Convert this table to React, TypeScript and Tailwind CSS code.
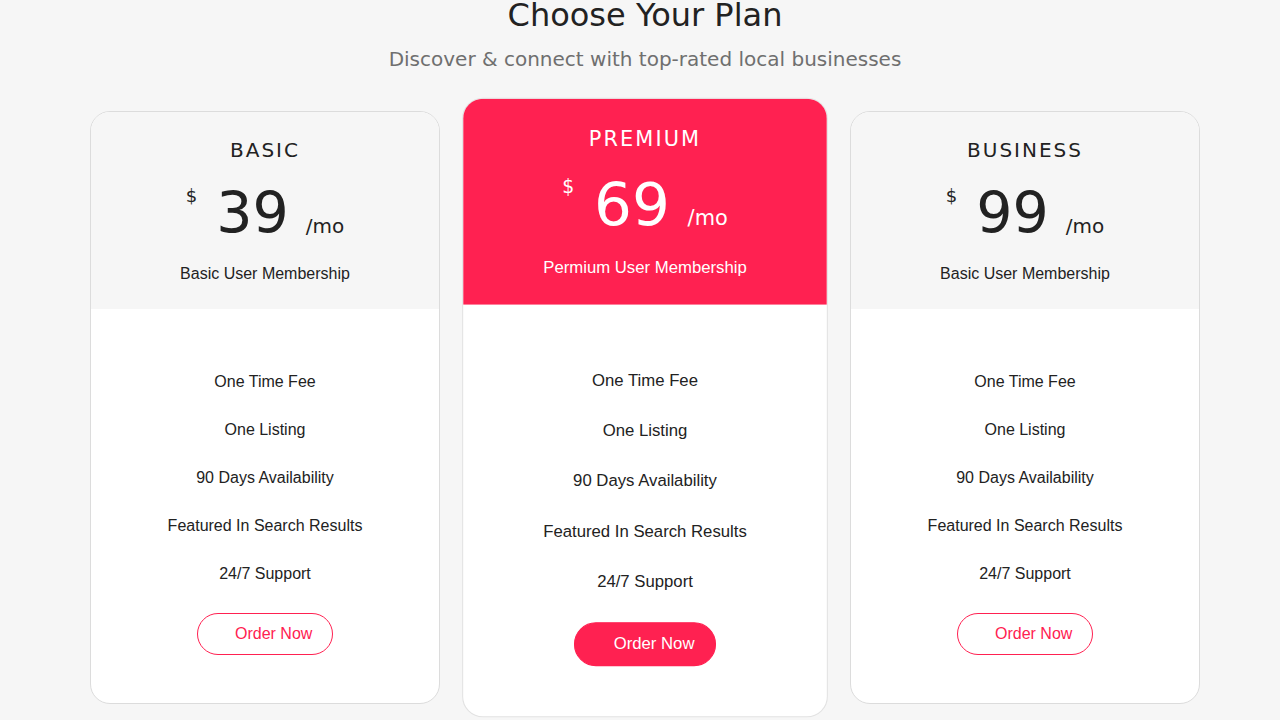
import React from "react";

/* Pricing table — three plans, middle one highlighted and scaled up */

type Plan = {
  name: string;
  price: string;
  blurb: string;
  featured?: boolean;
};

const plans: Plan[] = [
  { name: "BASIC", price: "39", blurb: "Basic User Membership" },
  { name: "PREMIUM", price: "69", blurb: "Permium User Membership", featured: true },
  { name: "BUSINESS", price: "99", blurb: "Basic User Membership" },
];

const features = [
  "One Time Fee",
  "One Listing",
  "90 Days Availability",
  "Featured In Search Results",
  "24/7 Support",
];

const dejavu = "font-['DejaVu_Sans',sans-serif]";
const arial = "font-['Liberation_Sans',Arial,sans-serif]";

function PlanCard({ plan }: { plan: Plan }) {
  const hot = !!plan.featured;
  return (
    <div
      className={`w-[350px] shrink-0 rounded-[20px] border overflow-hidden bg-white ${
        hot ? "border-[#e2e2e2] scale-[1.045] z-10 relative" : "border-[#dcdcdc]"
      }`}
    >
      {/* ── Header ── */}
      <div
        className={`pt-[26px] pb-[23px] text-center ${
          hot ? "bg-[#ff2151] text-white" : "bg-[#f6f6f6] text-[#222]"
        }`}
      >
        <div className={`${dejavu} text-[20px] leading-[24px] tracking-[2px]`}>
          {plan.name}
        </div>
        <div className={`${dejavu} mt-[21px] flex justify-center items-baseline`}>
          <span className="text-[18px] leading-none self-start mt-[4px] mr-[19px]">$</span>
          <span className="text-[57px] leading-[60px]">{plan.price}</span>
          <span className="text-[20px] leading-none ml-[17px]">/mo</span>
        </div>
        <div className={`${arial} mt-[19px] text-[16px] leading-[24px]`}>{plan.blurb}</div>
      </div>

      {/* ── Feature list ── */}
      <div className="pt-[49px] pb-[48px] flex flex-col items-center">
        {features.map((f) => (
          <div key={f} className={`${arial} text-[16px] leading-[48px] text-[#222]`}>
            {f}
          </div>
        ))}
        <button
          className={`${arial} mt-[15px] h-[42px] w-[136px] rounded-full border pl-[37px] pr-[22px] text-[16px] text-left whitespace-nowrap ${
            hot
              ? "bg-[#ff2151] border-[#ff2151] text-white"
              : "bg-white border-[#ff2151] text-[#ff2151]"
          }`}
        >
          Order Now
        </button>
      </div>
    </div>
  );
}

export default function App() {
  return (
    <div className="min-h-screen bg-[#f6f6f6] pl-[10px] overflow-hidden">
      <div className="text-center">
        <h1 className={`${dejavu} text-[32px] leading-[30px] text-[#222]`}>
          Choose Your Plan
        </h1>
        <p className={`${dejavu} mt-[14px] text-[20px] leading-[30px] text-[#6f6f6f]`}>
          Discover &amp; connect with top-rated local businesses
        </p>
      </div>
      <div className="mt-[37px] flex justify-center gap-[30px]">
        {plans.map((p) => (
          <PlanCard key={p.name} plan={p} />
        ))}
      </div>
    </div>
  );
}
